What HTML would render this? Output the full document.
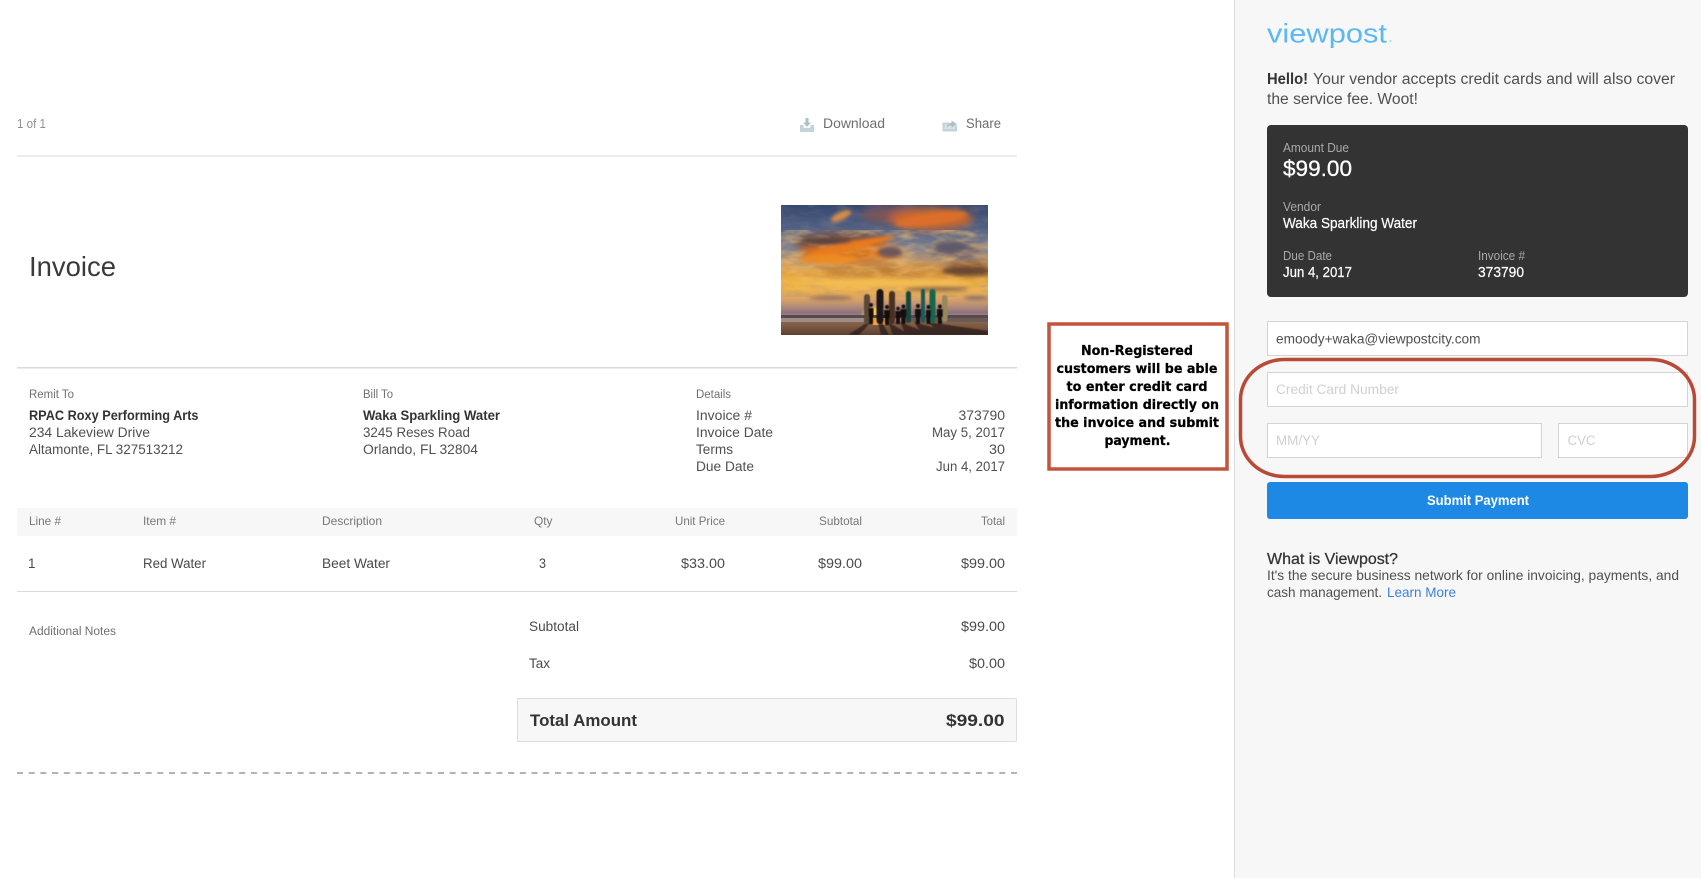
<!DOCTYPE html>
<html lang="en">
<head>
<meta charset="utf-8">
<title>Invoice</title>
<style>
html,body{margin:0;padding:0;background:#fff;width:1701px;height:878px;overflow:hidden}
svg{display:block;position:absolute;left:0;top:0}
text{font-family:"Liberation Sans",sans-serif;font-kerning:normal;white-space:pre}
.l{font-size:11.5px;fill:#707070}
.b{font-size:13.5px;fill:#505050}
.h{font-size:12px;fill:#777}
.d{font-size:13.5px;fill:#4a4a4a}
.cl{font-size:13px;fill:#a9a9a9}
.cv{font-size:14.5px;fill:#fff;stroke:#fff;stroke-width:.2}
.p{font-size:13.5px;fill:#d0d0d0}
.ann{font-family:"DejaVu Sans",sans-serif;font-weight:bold;font-size:13px;fill:#000;stroke:#000;stroke-width:.25}
.w{font-size:14px;fill:#505050}
</style>
</head>
<body>
<svg width="1701" height="878" viewBox="0 0 1701 878" xmlns="http://www.w3.org/2000/svg">
<defs>
<linearGradient id="sky" x1="0" y1="0" x2="0" y2="1">
<stop offset="0" stop-color="#36486f"/>
<stop offset=".18" stop-color="#506186"/>
<stop offset=".34" stop-color="#83848e"/>
<stop offset=".44" stop-color="#c69a68"/>
<stop offset=".53" stop-color="#e9a63e"/>
<stop offset=".64" stop-color="#f0b448"/>
<stop offset=".72" stop-color="#dca464"/>
<stop offset=".78" stop-color="#b48c78"/>
<stop offset=".83" stop-color="#8a7280"/>
<stop offset=".86" stop-color="#b08a78"/>
<stop offset="1" stop-color="#b08a78"/>
</linearGradient>
<linearGradient id="beach" x1="0" y1="0" x2="0" y2="1">
<stop offset="0" stop-color="#8a6448"/>
<stop offset="1" stop-color="#5e4032"/>
</linearGradient>
<filter id="b6" x="-50%" y="-50%" width="200%" height="200%"><feGaussianBlur stdDeviation="4"/></filter>
<filter id="b3" x="-50%" y="-50%" width="200%" height="200%"><feGaussianBlur stdDeviation="1.800"/></filter>
<filter id="b1" x="-10%" y="-10%" width="120%" height="120%"><feGaussianBlur stdDeviation=".45"/></filter>
<filter id="noise" x="0" y="0" width="100%" height="100%">
<feTurbulence type="fractalNoise" baseFrequency=".045 .13" numOctaves="3" seed="7"/>
<feColorMatrix values="0 0 0 0 .95  0 0 0 0 .55  0 0 0 0 .16  1.600 0 0 0 -.62"/>
</filter>
<filter id="noise2" x="0" y="0" width="100%" height="100%">
<feTurbulence type="fractalNoise" baseFrequency=".05 .14" numOctaves="3" seed="21"/>
<feColorMatrix values="0 0 0 0 .28  0 0 0 0 .22  0 0 0 0 .24  1.700 0 0 0 -.72"/>
</filter>
<clipPath id="ph"><rect x="0" y="0" width="207" height="130"/></clipPath>
</defs>

<!-- right panel -->
<rect x="1234" y="0" width="467" height="878" fill="#f7f7f7"/>
<rect x="1234" y="0" width="1" height="878" fill="#dcdcdc"/>

<!-- toolbar -->
<text x="17" y="128" font-size="13" fill="#8e8e8e" textLength="29" lengthAdjust="spacingAndGlyphs">1 of 1</text>
<path d="M800 125h3.500v2.800h7v-2.800h3.500v7h-14z" fill="#c4d2d9"/>
<path d="M805.500 118h3v4.600h2.500l-4 4.200-4-4.200h2.500z" fill="#aebfc8"/>
<path d="M942.500 122.500h6.500v2h-4.500v4.500h10.500v-3l2 -1v6.500h-14.500z" fill="#c4d2d9"/>
<rect x="944.500" y="124.500" width="10.500" height="4.500" fill="#d8e2e6"/>
<path d="M951.500 120.500l5.500 3.600-5.500 3.600v-2.200c-2.300 0-3.600.7-4.800 2.500.2-3.300 1.900-5 4.800-5.300z" fill="#aebfc8"/>
<text x="823" y="128" font-size="13.500" fill="#6e6e73" textLength="62" lengthAdjust="spacingAndGlyphs">Download</text>
<text x="966" y="128" font-size="13.500" fill="#6e6e73" textLength="35" lengthAdjust="spacingAndGlyphs">Share</text>
<rect x="17" y="155.500" width="1000" height="1" fill="#dadada"/>

<!-- title -->
<text x="29" y="276" font-size="27.500" fill="#3a3a3a" textLength="87" lengthAdjust="spacingAndGlyphs">Invoice</text>

<!-- photo -->
<g transform="translate(781 205)">
<g clip-path="url(#ph)">
<rect width="207" height="130" fill="url(#sky)"/>
<rect width="207" height="92" filter="url(#noise2)" opacity=".45"/>
<g filter="url(#b6)">
<ellipse cx="120" cy="10" rx="40" ry="9" fill="#7a5458"/>
<ellipse cx="150" cy="14" rx="42" ry="11" fill="#c8682e"/>
<ellipse cx="60" cy="38" rx="46" ry="10" fill="#7a5040"/>
<ellipse cx="70" cy="48" rx="52" ry="9" fill="#d8741e"/>
<ellipse cx="175" cy="45" rx="26" ry="9" fill="#6e6470"/>
<ellipse cx="190" cy="64" rx="26" ry="7" fill="#80522c"/>
<ellipse cx="105" cy="66" rx="70" ry="5" fill="#b87830"/>
</g>
<rect y="25" width="207" height="60" filter="url(#noise)" opacity=".8"/>
<g filter="url(#b3)">
<ellipse cx="60" cy="11" rx="11" ry="4" fill="#d88c48" transform="rotate(-25 60 11)"/>
<ellipse cx="150" cy="14" rx="36" ry="6" fill="#dc6e2c" transform="rotate(-8 150 14)"/>
<ellipse cx="70" cy="41" rx="44" ry="4" fill="#ea7a1c" transform="rotate(-12 70 41)"/>
<ellipse cx="48" cy="54" rx="30" ry="4" fill="#ee8a22"/>
<ellipse cx="109" cy="47" rx="12" ry="5" fill="#6a5660"/>
<ellipse cx="45" cy="36" rx="26" ry="3.500" fill="#5a4440"/>
<ellipse cx="185" cy="66" rx="24" ry="4" fill="#6a4630"/>
<ellipse cx="170" cy="42" rx="15" ry="5" fill="#5e5a68"/>
<ellipse cx="100" cy="78" rx="90" ry="3.500" fill="#f4bc50"/>
<ellipse cx="50" cy="93" rx="22" ry="2" fill="#90705c"/>
<ellipse cx="155" cy="84" rx="32" ry="2.500" fill="#94704e"/>
<ellipse cx="195" cy="93" rx="13" ry="2" fill="#86706a"/>
<ellipse cx="94" cy="110" rx="12" ry="8" fill="#ffd040"/>
</g>
<rect y="110" width="207" height="3" fill="#5a484a"/>
<rect y="113" width="85" height="4" fill="#9c8e88"/>
<rect x="120" y="113" width="87" height="4" fill="#6a5a58"/>
<rect y="117" width="207" height="13" fill="url(#beach)"/>
<path d="M87 113h15l3 7H92z" fill="#f4a830"/>
<g fill="#2a1a1a" opacity=".75" filter="url(#b1)">
<path d="M67 130l20-13h3l-12 13zM100 130l-3-13h4l7 13zM112 130l-5-13 22 13zM125 130l-6-13 32 13zM142 130l-9-13 45 13zM160 130l-13-13 60 9v4z"/>
</g>
<g filter="url(#b1)">
<rect x="83" y="89" width="6" height="30" rx="3" fill="#5a4838"/>
<rect x="95.500" y="84" width="7" height="35" rx="3.500" fill="#1e181e"/>
<rect x="108" y="86" width="6" height="33" rx="3" fill="#4a3220"/>
<rect x="125" y="86" width="5" height="32" rx="2.500" fill="#14463c"/>
<rect x="140" y="84" width="4" height="34" rx="2" fill="#1a5a58"/>
<rect x="148.500" y="84" width="6" height="34" rx="3" fill="#126650"/>
<rect x="161" y="90" width="5.500" height="27" rx="2.700" fill="#9a8858"/>
<g fill="#120d10">
<rect x="87.500" y="103" width="5" height="8"/><circle cx="90" cy="100" r="2"/><rect x="88" y="110" width="4" height="9"/>
<rect x="103" y="105" width="6" height="8"/><circle cx="106" cy="102" r="2"/><rect x="104" y="112" width="4" height="8"/>
<rect x="114.500" y="106" width="5" height="7"/><circle cx="117" cy="103.500" r="1.800"/><rect x="115" y="112" width="4" height="7"/>
<rect x="119.500" y="104" width="6" height="8"/><circle cx="122.500" cy="101.500" r="2"/><rect x="120.500" y="111" width="4" height="8"/>
<rect x="134" y="104" width="6" height="8"/><circle cx="137" cy="101" r="2"/><rect x="135" y="111" width="4" height="8"/>
<rect x="145" y="105" width="5" height="7"/><circle cx="147.500" cy="102" r="2"/><rect x="145.500" y="111" width="4" height="8"/>
<rect x="156" y="104" width="6" height="8"/><circle cx="159" cy="101.500" r="2"/><rect x="157" y="111" width="4" height="8"/>
</g>
</g>
</g>
</g>

<rect x="17" y="367" width="1000" height="1.500" fill="#dadada"/>

<!-- addresses -->
<text x="29" y="398" class="l" textLength="45" lengthAdjust="spacingAndGlyphs">Remit To</text>
<text x="363" y="398" class="l" textLength="30" lengthAdjust="spacingAndGlyphs">Bill To</text>
<text x="696" y="398" class="l" textLength="35" lengthAdjust="spacingAndGlyphs">Details</text>

<text x="29" y="420" class="b" style="fill:#333;font-weight:bold" textLength="169.500" lengthAdjust="spacingAndGlyphs">RPAC Roxy Performing Arts</text>
<text x="29" y="437" class="b" textLength="121" lengthAdjust="spacingAndGlyphs">234 Lakeview Drive</text>
<text x="29" y="454" class="b" textLength="154" lengthAdjust="spacingAndGlyphs">Altamonte, FL 327513212</text>

<text x="363" y="420" class="b" style="fill:#333;font-weight:bold" textLength="137" lengthAdjust="spacingAndGlyphs">Waka Sparkling Water</text>
<text x="363" y="437" class="b" textLength="107" lengthAdjust="spacingAndGlyphs">3245 Reses Road</text>
<text x="363" y="454" class="b" textLength="115" lengthAdjust="spacingAndGlyphs">Orlando, FL 32804</text>

<text x="696" y="420" class="b" textLength="56" lengthAdjust="spacingAndGlyphs">Invoice #</text>
<text x="696" y="437" class="b" textLength="77" lengthAdjust="spacingAndGlyphs">Invoice Date</text>
<text x="696" y="454" class="b" textLength="37" lengthAdjust="spacingAndGlyphs">Terms</text>
<text x="696" y="471" class="b" textLength="58" lengthAdjust="spacingAndGlyphs">Due Date</text>
<text x="958.500" y="420" class="b" textLength="46.500" lengthAdjust="spacingAndGlyphs">373790</text>
<text x="932" y="437" class="b" textLength="73" lengthAdjust="spacingAndGlyphs">May 5, 2017</text>
<text x="989" y="454" class="b" textLength="16" lengthAdjust="spacingAndGlyphs">30</text>
<text x="936" y="471" class="b" textLength="69" lengthAdjust="spacingAndGlyphs">Jun 4, 2017</text>

<!-- table -->
<rect x="17" y="508" width="1000" height="28" fill="#f7f7f7"/>
<text x="29" y="525" class="h" textLength="32" lengthAdjust="spacingAndGlyphs">Line #</text>
<text x="143" y="525" class="h" textLength="33" lengthAdjust="spacingAndGlyphs">Item #</text>
<text x="322" y="525" class="h" textLength="60" lengthAdjust="spacingAndGlyphs">Description</text>
<text x="534" y="525" class="h" textLength="18.500" lengthAdjust="spacingAndGlyphs">Qty</text>
<text x="675" y="525" class="h" textLength="50" lengthAdjust="spacingAndGlyphs">Unit Price</text>
<text x="819" y="525" class="h" textLength="43" lengthAdjust="spacingAndGlyphs">Subtotal</text>
<text x="981" y="525" class="h" textLength="24" lengthAdjust="spacingAndGlyphs">Total</text>

<text x="28" y="568" class="d">1</text>
<text x="143" y="568" class="d" textLength="63" lengthAdjust="spacingAndGlyphs">Red Water</text>
<text x="322" y="568" class="d" textLength="68" lengthAdjust="spacingAndGlyphs">Beet Water</text>
<text x="539" y="568" class="d" textLength="7" lengthAdjust="spacingAndGlyphs">3</text>
<text x="681" y="568" class="d" textLength="44" lengthAdjust="spacingAndGlyphs">$33.00</text>
<text x="818" y="568" class="d" textLength="44" lengthAdjust="spacingAndGlyphs">$99.00</text>
<text x="961" y="568" class="d" textLength="44" lengthAdjust="spacingAndGlyphs">$99.00</text>
<rect x="17" y="591" width="1000" height="1" fill="#dadada"/>

<!-- totals -->
<text x="29" y="635" class="l" textLength="87" lengthAdjust="spacingAndGlyphs">Additional Notes</text>
<text x="529" y="631" class="d" textLength="50" lengthAdjust="spacingAndGlyphs">Subtotal</text>
<text x="961" y="631" class="d" textLength="44" lengthAdjust="spacingAndGlyphs">$99.00</text>
<text x="529" y="668" class="d" textLength="21" lengthAdjust="spacingAndGlyphs">Tax</text>
<text x="969" y="668" class="d" textLength="36" lengthAdjust="spacingAndGlyphs">$0.00</text>
<rect x="517.500" y="698.500" width="499" height="43" rx="1" fill="#f7f7f7" stroke="#dddddd"/>
<text x="530" y="726" font-size="16.500" font-weight="bold" fill="#333" textLength="107" lengthAdjust="spacingAndGlyphs">Total Amount</text>
<text x="946" y="726" font-size="16.500" font-weight="bold" fill="#333" textLength="58.500" lengthAdjust="spacingAndGlyphs">$99.00</text>
<line x1="17" y1="773" x2="1017" y2="773" stroke="#b3b3b3" stroke-width="2" stroke-dasharray="6 5.694"/>

<!-- annotation -->
<rect x="1049" y="324" width="178" height="145" fill="#fff" stroke="#c4533c" stroke-width="3.500"/>
<text x="1081" y="355" class="ann" textLength="112" lengthAdjust="spacingAndGlyphs">Non-Registered</text>
<text x="1056.500" y="373" class="ann" textLength="161" lengthAdjust="spacingAndGlyphs">customers will be able</text>
<text x="1066.500" y="391" class="ann" textLength="141" lengthAdjust="spacingAndGlyphs">to enter credit card</text>
<text x="1055" y="409" class="ann" textLength="164" lengthAdjust="spacingAndGlyphs">information directly on</text>
<text x="1055" y="427" class="ann" textLength="164" lengthAdjust="spacingAndGlyphs">the invoice and submit</text>
<text x="1104.500" y="445" class="ann" textLength="66" lengthAdjust="spacingAndGlyphs">payment.</text>

<!-- logo -->
<text x="1267" y="42.500" font-size="27" fill="#5cb8f2" textLength="120" lengthAdjust="spacingAndGlyphs">viewpost</text>
<circle cx="1390.500" cy="41" r="1" fill="#a9d9f6"/>

<!-- hello -->
<text x="1267" y="84" font-size="15.500" fill="#333" font-weight="bold" textLength="41" lengthAdjust="spacingAndGlyphs">Hello!</text>
<text x="1313" y="84" font-size="15.500" fill="#505050" textLength="362" lengthAdjust="spacingAndGlyphs">Your vendor accepts credit cards and will also cover</text>
<text x="1267" y="104" font-size="15.500" fill="#505050" textLength="151" lengthAdjust="spacingAndGlyphs">the service fee. Woot!</text>

<!-- dark card -->
<rect x="1267" y="125" width="421" height="172" rx="4" fill="#333"/>
<text x="1283" y="152" class="cl" textLength="66" lengthAdjust="spacingAndGlyphs">Amount Due</text>
<text x="1283" y="176" font-size="22.500" fill="#fff" stroke="#fff" stroke-width=".3" textLength="69" lengthAdjust="spacingAndGlyphs">$99.00</text>
<text x="1283" y="211" class="cl" textLength="38" lengthAdjust="spacingAndGlyphs">Vendor</text>
<text x="1283" y="228" class="cv" textLength="134" lengthAdjust="spacingAndGlyphs">Waka Sparkling Water</text>
<text x="1283" y="260" class="cl" textLength="49" lengthAdjust="spacingAndGlyphs">Due Date</text>
<text x="1283" y="277" class="cv" textLength="69" lengthAdjust="spacingAndGlyphs">Jun 4, 2017</text>
<text x="1478" y="260" class="cl" textLength="47" lengthAdjust="spacingAndGlyphs">Invoice #</text>
<text x="1478" y="277" class="cv" textLength="46" lengthAdjust="spacingAndGlyphs">373790</text>

<!-- inputs -->
<rect x="1267.500" y="321.500" width="420" height="34" fill="#fff" stroke="#d4d4d4"/>
<text x="1276" y="343.500" font-size="13.500" fill="#505050" textLength="204.500" lengthAdjust="spacingAndGlyphs">emoody+waka@viewpostcity.com</text>
<rect x="1267.500" y="372.500" width="420" height="34" fill="#fff" stroke="#d4d4d4"/>
<text x="1276" y="394" class="p" textLength="123" lengthAdjust="spacingAndGlyphs">Credit Card Number</text>
<rect x="1267.500" y="423.500" width="274" height="34" fill="#fff" stroke="#d4d4d4"/>
<text x="1276" y="445" class="p" textLength="44" lengthAdjust="spacingAndGlyphs">MM/YY</text>
<rect x="1558.500" y="423.500" width="129" height="34" fill="#fff" stroke="#d4d4d4"/>
<text x="1567.500" y="445" class="p" textLength="28" lengthAdjust="spacingAndGlyphs">CVC</text>

<!-- red callout -->
<rect x="1240.500" y="359.500" width="454" height="117" rx="44" ry="40" fill="none" stroke="#b94a36" stroke-width="3.500"/>

<!-- button -->
<rect x="1267" y="482" width="421" height="37" rx="3" fill="#1e88e5"/>
<text x="1427" y="505" font-size="13.500" font-weight="bold" fill="#fff" textLength="102" lengthAdjust="spacingAndGlyphs">Submit Payment</text>

<!-- what is -->
<text x="1267" y="564" font-size="15.500" fill="#333" stroke="#333" stroke-width=".25" textLength="131" lengthAdjust="spacingAndGlyphs">What is Viewpost?</text>
<text x="1267" y="580" class="w" textLength="412" lengthAdjust="spacingAndGlyphs">It's the secure business network for online invoicing, payments, and</text>
<text x="1267" y="597" class="w" textLength="115" lengthAdjust="spacingAndGlyphs">cash management.</text>
<text x="1387" y="597" font-size="14" fill="#3d80dc" textLength="69" lengthAdjust="spacingAndGlyphs">Learn More</text>
</svg>
</body>
</html>
